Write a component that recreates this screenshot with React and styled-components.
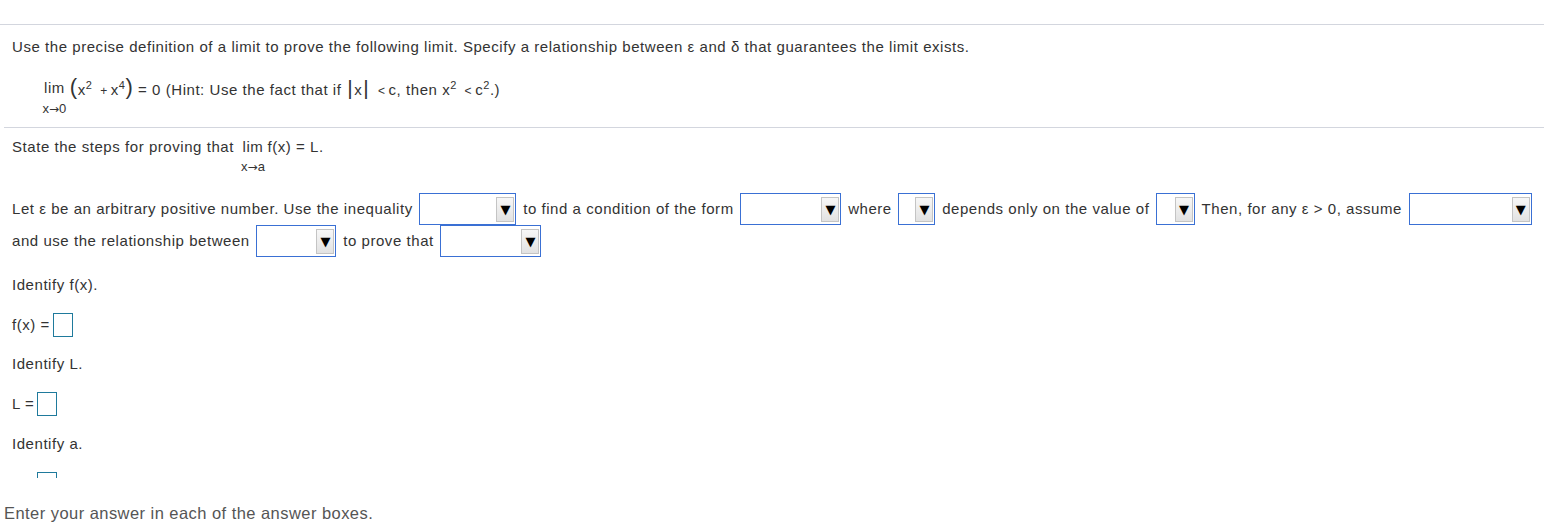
import styled, { createGlobalStyle } from "styled-components";

const GlobalStyle = createGlobalStyle`
  body {
    margin: 0;
    background: #fff;
    font-family: "Liberation Sans", Arial, sans-serif;
    color: #333;
  }
`;

const Page = styled.div`
  width: 1544px;
  height: 530px;
  overflow: hidden;
  padding-top: 24px;
  box-sizing: border-box;
`;

const Panel = styled.div`
  border-top: 1px solid #d3d6de;
  height: 453px;
  overflow: hidden;
  font-size: 15px;
  letter-spacing: 0.55px;
`;

const Block = styled.div`
  padding: 0 12px;
`;

const Text = styled.div`
  line-height: 18px;
  margin-top: ${(p) => p.$mt || 0}px;
  white-space: nowrap;
`;

const MathRow = styled.div`
  display: flex;
  align-items: flex-start;
  margin-top: ${(p) => p.$mt || 0}px;
  padding-left: ${(p) => p.$pl || 0}px;
  line-height: 20px;
  white-space: nowrap;
`;

const Lim = styled.span`
  display: inline-flex;
  flex-direction: column;
  align-items: center;
  margin: 0 ${(p) => p.$mr || 4}px 0 ${(p) => p.$ml || 0}px;
`;

const LimSub = styled.span`
  font-size: 13px;
  line-height: 16px;
  margin: ${(p) => p.$mt || 2}px -5px 0;
  letter-spacing: 0;
`;

const ArrowGlyph = styled.span`
  font-family: "DejaVu Sans", sans-serif;
  font-size: 12px;
`;

const Paren = styled.span`
  font-size: 22px;
  line-height: 20px;
  position: relative;
  top: -1px;
`;

const Bar = styled.span`
  font-size: 21px;
  line-height: 20px;
  margin: 0 1px;
`;

const Sup = styled.sup`
  font-size: 11px;
  line-height: 0;
  vertical-align: 6px;
`;

const Small = styled.span`
  font-size: 12px;
  margin: 0 3px;
`;

const Divider = styled.div`
  border-top: 1px solid #d3d6de;
  margin: ${(p) => p.$mt}px 0 0 4px;
`;

const Steps = styled.div`
  margin-top: 18px;
  line-height: 32px;
  white-space: nowrap;
`;

const Select = styled.span`
  display: inline-flex;
  justify-content: flex-end;
  align-items: center;
  vertical-align: top;
  box-sizing: border-box;
  width: ${(p) => p.$w}px;
  height: 32px;
  border: 1px solid #3a70d4;
  margin: 0 2px;
  padding-right: 1px;
  background: #fff;
`;

const Arrow = styled.span`
  display: flex;
  align-items: center;
  justify-content: center;
  width: 18px;
  height: 25px;
  box-sizing: border-box;
  border: 1px solid #c4c4c4;
  background: linear-gradient(#f7f7f7, #e2e2e2);
  font-family: "DejaVu Sans", sans-serif;
  font-size: 13px;
  letter-spacing: 0;
  line-height: 1;
  color: #000;
`;

const AnswerRow = styled.div`
  display: flex;
  align-items: center;
  margin-top: ${(p) => p.$mt}px;
  line-height: 18px;
`;

const Box = styled.span`
  display: inline-block;
  width: 20px;
  height: 24px;
  box-sizing: border-box;
  border: 1.5px solid #1f7a9c;
  margin-left: 3px;
`;

const Footer = styled.div`
  padding: 25px 0 0 4px;
  font-size: 16.5px;
  letter-spacing: 0.45px;
  line-height: 20px;
  color: #555;
`;

const Dropdown = ({ w }) => (
  <>
    {" "}
    <Select $w={w}>
      <Arrow>▼</Arrow>
    </Select>{" "}
  </>
);

export default function App() {
  return (
    <>
      <GlobalStyle />
      <Page>
        <Panel>
          <Block>
            <Text $mt={13}>
              Use the precise definition of a limit to prove the following limit. Specify a relationship between ε and δ that guarantees the limit exists.
            </Text>
            <MathRow $mt={22} $pl={32}>
              <Lim $mr={5}>
                <span>lim</span>
                <LimSub $mt={3}>
                  x<ArrowGlyph>→</ArrowGlyph>0
                </LimSub>
              </Lim>
              <span>
                <Paren>(</Paren>x<Sup>2</Sup> <Small>+</Small>x<Sup>4</Sup>
                <Paren>)</Paren> = 0 (Hint: Use the fact that if <Bar>|</Bar>x<Bar>|</Bar>{" "}
                <Small>&lt;</Small>c, then x<Sup>2</Sup> <Small>&lt;</Small>c<Sup>2</Sup>.)
              </span>
            </MathRow>
          </Block>
          <Divider $mt={10} />
          <Block>
            <MathRow $mt={9}>
              <span>State the steps for proving that&nbsp;</span>
              <Lim $mr={4} $ml={4}>
                <span>lim</span>
                <LimSub $mt={2}>
                  x<ArrowGlyph>→</ArrowGlyph>a
                </LimSub>
              </Lim>
              <span>f(x) = L.</span>
            </MathRow>
            <Steps>
              Let ε be an arbitrary positive number. Use the inequality
              <Dropdown w={97} />
              to find a condition of the form
              <Dropdown w={101} />
              where
              <Dropdown w={37} />
              depends only on the value of
              <Dropdown w={39} />
              Then, for any ε &gt; 0, assume
              <Dropdown w={123} />
              <br />
              and use the relationship between
              <Dropdown w={80} />
              to prove that
              <Dropdown w={101} />
            </Steps>
            <Text $mt={19}>Identify f(x).</Text>
            <AnswerRow $mt={19}>
              f(x) =<Box />
            </AnswerRow>
            <Text $mt={18}>Identify L.</Text>
            <AnswerRow $mt={19}>
              L =<Box />
            </AnswerRow>
            <Text $mt={19}>Identify a.</Text>
            <AnswerRow $mt={19}>
              <span style={{ visibility: "hidden" }}>L =</span>
              <Box />
            </AnswerRow>
          </Block>
        </Panel>
        <Footer>Enter your answer in each of the answer boxes.</Footer>
      </Page>
    </>
  );
}
